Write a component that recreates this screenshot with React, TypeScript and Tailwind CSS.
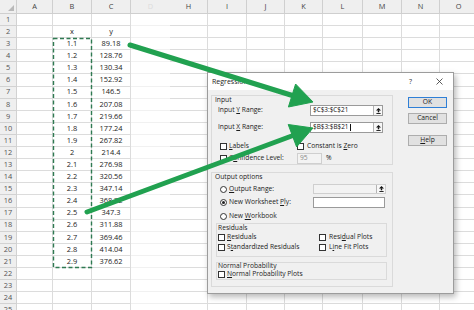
import React from 'react';

const GRID =
  'grid grid-cols-[17px_36px_39px_39px_39px_38px_39px_38px_38px_40px_39px_38px_38px]';
const LETTERS = ['A', 'B', 'C', 'D', 'H', 'I', 'J', 'K', 'L', 'M', 'N', 'O'];

const XS = ['1.1', '1.2', '1.3', '1.4', '1.5', '1.6', '1.7', '1.8', '1.9', '2', '2.1', '2.2', '2.3', '2.4', '2.5', '2.6', '2.7', '2.8', '2.9'];
const YS = ['89.18', '128.76', '130.34', '152.92', '146.5', '207.08', '219.66', '177.24', '267.82', '214.4', '276.98', '320.56', '347.14', '368.72', '347.3', '311.88', '369.46', '414.04', '376.62'];

const cellValue = (col: string, row: number) => {
  if (row === 2 && col === 'B') return 'x';
  if (row === 2 && col === 'C') return 'y';
  if (row >= 3 && row <= 21) {
    if (col === 'B') return XS[row - 3];
    if (col === 'C') return YS[row - 3];
  }
  return '';
};

const Sheet = () => {
  const rows = Array.from({ length: 25 }, (_, i) => i + 1);
  return (
    <div className="flex flex-col font-['Open_Sans',sans-serif] text-[7.4px] leading-none">
      <div className={`${GRID} h-[14px] bg-[#efefef]`}>
        <div className="flex items-end justify-end p-[2px] border-r border-b border-[#cfcfcf]">
          <svg width="6" height="6" viewBox="0 0 6 6">
            <polygon points="6,0 6,6 0,6" fill="#b9b9b9" />
          </svg>
        </div>
        {LETTERS.map((l) => (
          <div
            key={l}
            className={`flex items-center justify-center border-b border-[#cfcfcf] ${
              l === 'D' ? 'text-[#dcdcdc] border-r-0' : 'text-[#444] border-r'
            }`}
          >
            {l}
          </div>
        ))}
      </div>
      {rows.map((r) => (
        <div key={r} className={`${GRID} h-[12.1px]`}>
          <div className="flex items-center justify-center bg-[#efefef] border-r border-b border-[#d2d2d2] text-[#555]">
            {r}
          </div>
          {LETTERS.map((l) => (
            <div
              key={l}
              className={`flex items-center justify-center text-[#222] border-b ${
                l === 'D' ? 'border-[#f1f1f1]' : 'border-r border-[#dcdcdc]'
              }`}
            >
              {cellValue(l, r)}
            </div>
          ))}
        </div>
      ))}
    </div>
  );
};

const Check = ({ on }: { on?: boolean }) => (
  <span className="w-[7px] h-[7px] shrink-0 border border-[#333] bg-white flex items-center justify-center">
    {on && <span className="w-[3px] h-[3px] bg-[#333]" />}
  </span>
);

const Radio = ({ on }: { on?: boolean }) => (
  <span className="w-[7px] h-[7px] shrink-0 rounded-full border border-[#333] bg-white flex items-center justify-center">
    {on && <span className="w-[3px] h-[3px] rounded-full bg-[#222]" />}
  </span>
);

const PickIcon = () => (
  <svg width="5" height="6" viewBox="0 0 5 6">
    <polygon points="2.5,0 5,2.4 0,2.4" fill="#111" />
    <rect x="1.8" y="2.3" width="1.4" height="2" fill="#111" />
    <rect x="0.4" y="5" width="4.2" height="0.9" fill="#111" />
  </svg>
);

const RangeBox = ({ value, disabled, cursor }: { value?: string; disabled?: boolean; cursor?: boolean }) => (
  <div
    className={`flex h-full w-[73px] border ${
      disabled ? 'border-[#cfcfcf] bg-[#f3f3f3]' : 'border-[#9a9a9a] bg-white'
    }`}
  >
    <div className="flex-1 flex items-center pl-[2px] text-[6.4px] text-[#111]">
      {value}
      {cursor && <span className="w-px h-[7px] bg-[#111] ml-px" />}
    </div>
    <div className="w-[9px] h-full border-l border-[#b4b4b4] bg-[#f7f7f7] flex items-center justify-center">
      <PickIcon />
    </div>
  </div>
);

const Btn = ({ children, focus }: { children: React.ReactNode; focus?: boolean }) => (
  <div
    className={`h-[11px] w-full flex items-center justify-center bg-[#e1e1e1] border ${
      focus ? 'border-[#2f7fd6]' : 'border-[#adadad]'
    }`}
  >
    {children}
  </div>
);

const Dialog = () => (
  <div className="absolute left-[207px] top-[72px] w-[247px] h-[222px] flex flex-col bg-[#f0f0f0] border border-[#9c9c9c] shadow-[2px_3px_6px_rgba(0,0,0,0.28)] font-['Open_Sans',sans-serif] text-[6.7px] leading-none text-[#1b1b1b]">
    <div className="h-[17px] shrink-0 bg-white flex items-center pl-[4px] pr-[10px]">
      <span className="text-[7px]">Regression</span>
      <span className="ml-auto mr-[24px] text-[7px] text-[#333]">?</span>
      <svg width="7" height="7" viewBox="0 0 7 7">
        <path d="M0.5 0.5 L6.5 6.5 M6.5 0.5 L0.5 6.5" stroke="#333" strokeWidth="0.8" />
      </svg>
    </div>
    <div className="flex pt-[5px] pl-[3px]">
      <div className="w-[182px] flex flex-col">
        <div className="h-[70px] border border-[#dadada] flex flex-col">
          <div className="h-[8px] flex items-center pl-[3px]">Input</div>
          <div className="mt-[1px] h-[11px] flex items-center pl-[6px]">
            <span className="w-[92px]">
              Input <u>Y</u> Range:
            </span>
            <RangeBox value="$C$3:$C$21" />
          </div>
          <div className="mt-[6px] h-[11px] flex items-center pl-[6px]">
            <span className="w-[92px]">
              Input <u>X</u> Range:
            </span>
            <RangeBox value="$B$3:$B$21" cursor />
          </div>
          <div className="mt-[9px] h-[9px] flex items-center pl-[8px]">
            <span className="w-[77px] flex items-center gap-[2px]">
              <Check />
              <span>
                <u>L</u>abels
              </span>
            </span>
            <span className="flex items-center gap-[3px]">
              <Check />
              <span>
                Constant is <u>Z</u>ero
              </span>
            </span>
          </div>
          <div className="mt-[2px] h-[11px] flex items-center pl-[8px]">
            <span className="w-[77px] flex items-center gap-[2px]">
              <Check />
              <span>
                C<u>o</u>nfidence Level:
              </span>
            </span>
            <span className="w-[25px] h-full border border-[#cfcfcf] bg-[#f3f3f3] flex items-center pl-[2px] text-[#8a8a8a]">
              95
            </span>
            <span className="ml-[4px]">%</span>
          </div>
        </div>
        <div className="mt-[7px] h-[115px] border border-[#dadada] flex flex-col">
          <div className="h-[8px] flex items-center pl-[3px]">Output options</div>
          <div className="mt-[3px] h-[10px] flex items-center pl-[8px]">
            <span className="w-[93px] flex items-center gap-[2px]">
              <Radio />
              <span>
                <u>O</u>utput Range:
              </span>
            </span>
            <RangeBox disabled />
          </div>
          <div className="mt-[3px] h-[11px] flex items-center pl-[8px]">
            <span className="w-[93px] flex items-center gap-[2px]">
              <Radio on />
              <span>
                New Worksheet <u>P</u>ly:
              </span>
            </span>
            <span className="w-[72px] h-full border border-[#9a9a9a] bg-white" />
          </div>
          <div className="mt-[3px] h-[10px] flex items-center pl-[8px] gap-[2px]">
            <Radio />
            <span>
              New <u>W</u>orkbook
            </span>
          </div>
          <div className="mt-[2px] ml-[4px] mr-[5px] h-[34px] border border-[#dadada] flex flex-col pl-[1px]">
            <div className="h-[8px] flex items-center">Residuals</div>
            <div className="mt-[1px] h-[9px] flex items-center">
              <span className="w-[101px] flex items-center gap-[2px]">
                <Check />
                <span>
                  <u>R</u>esiduals
                </span>
              </span>
              <span className="flex items-center gap-[3px]">
                <Check />
                <span>
                  Resi<u>d</u>ual Plots
                </span>
              </span>
            </div>
            <div className="h-[10px] flex items-center">
              <span className="w-[101px] flex items-center gap-[2px]">
                <Check />
                <span>
                  S<u>t</u>andardized Residuals
                </span>
              </span>
              <span className="flex items-center gap-[3px]">
                <Check />
                <span>
                  L<u>i</u>ne Fit Plots
                </span>
              </span>
            </div>
          </div>
          <div className="mt-[5px] ml-[4px] mr-[5px] h-[18px] border border-[#dadada] flex flex-col pl-[1px]">
            <div className="h-[7px] flex items-center">Normal Probability</div>
            <div className="h-[9px] flex items-center gap-[2px]">
              <Check />
              <span>
                <u>N</u>ormal Probability Plots
              </span>
            </div>
          </div>
        </div>
      </div>
      <div className="ml-[15px] w-[39px] flex flex-col">
        <div className="mt-[2px]">
          <Btn focus>OK</Btn>
        </div>
        <div className="mt-[5px]">
          <Btn>Cancel</Btn>
        </div>
        <div className="mt-[11px]">
          <Btn>
            <span>
              <u>H</u>elp
            </span>
          </Btn>
        </div>
      </div>
    </div>
  </div>
);

const Ants = () => (
  <svg className="absolute inset-0 pointer-events-none" width="474" height="310">
    <rect x="53.5" y="38.5" width="38" height="229" fill="none" stroke="#2f7a52" strokeWidth="1.4" strokeDasharray="4 2.5" />
  </svg>
);

const Arrows = () => (
  <svg className="absolute inset-0 pointer-events-none" width="474" height="310">
    <g fill="#21a150" stroke="#21a150">
      <line x1="130" y1="45" x2="294" y2="96" strokeWidth="5" strokeLinecap="round" />
      <polygon points="313,102 288.4,107 295.6,84" strokeWidth="1" strokeLinejoin="round" />
      <line x1="87" y1="212" x2="293" y2="135.5" strokeWidth="5" strokeLinecap="round" />
      <polygon points="313,128 296.6,146.9 288.2,124.5" strokeWidth="1" strokeLinejoin="round" />
    </g>
  </svg>
);

export default function App() {
  return (
    <div className="relative w-[474px] h-[310px] overflow-hidden bg-white">
      <Sheet />
      <Ants />
      <Dialog />
      <Arrows />
    </div>
  );
}
